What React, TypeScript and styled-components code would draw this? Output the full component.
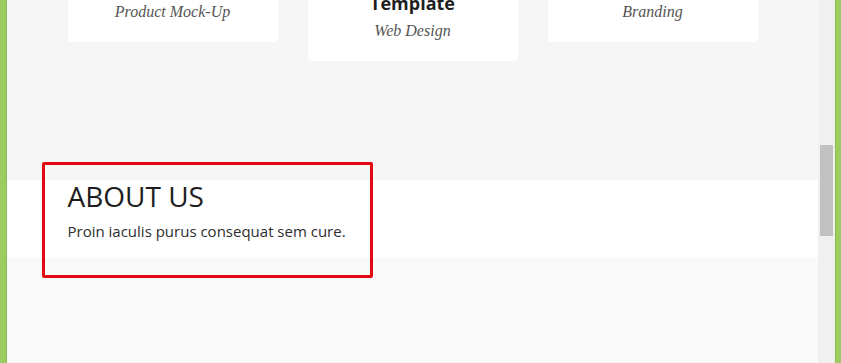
import styled, { createGlobalStyle } from 'styled-components'

const GlobalStyle = createGlobalStyle`
  html, body {
    margin: 0;
    padding: 0;
    height: 100%;
    overflow: hidden;
  }
  #root {
    height: 100%;
  }
`

const projects = [
  { title: 'Product Mock-Up Design', category: 'Product Mock-Up' },
  { title: 'Landing Page Template', category: 'Web Design' },
  { title: 'Brand Identity', category: 'Branding' },
]

const App = () => {
  return (
    <>
      <GlobalStyle />
      <Frame>
        <Edge />
        <Page>
          <Portfolio>
            <CardRow>
              {projects.map((project, index) => (
                <Card key={project.category}>
                  <Thumb />
                  <CardTitle $wide={index === 1}>{project.title}</CardTitle>
                  <Category>{project.category}</Category>
                </Card>
              ))}
            </CardRow>
          </Portfolio>

          <About>
            <Container>
              <Highlight />
              <Heading>ABOUT US</Heading>
              <Lead>Proin iaculis purus consequat sem cure.</Lead>
            </Container>
          </About>

          <Rest />
        </Page>
        <ScrollTrack>
          <ScrollThumb />
        </ScrollTrack>
        <Edge $right />
      </Frame>
    </>
  )
}

export default App

const Frame = styled.div`
  display: flex;
  height: 363px;
  width: 841px;
  overflow: hidden;
  background: #f5f5f5;
`

const Edge = styled.div<{ $right?: boolean }>`
  flex: 0 0 ${({ $right }) => ($right ? '6px' : '7px')};
  background: #9ccd5f;
  box-shadow: ${({ $right }) =>
    $right ? 'inset 1px 0 0 #8dbd52' : 'inset -1px 0 0 #8dbd52'};
`

const Page = styled.main`
  flex: 1;
  display: flex;
  flex-direction: column;
  min-width: 0;
  font-family: 'Open Sans', 'Noto Sans', sans-serif;
`

const Portfolio = styled.section`
  background: #f6f6f6;
  padding-bottom: 119px;
`

const CardRow = styled.div`
  display: flex;
  justify-content: center;
  align-items: flex-start;
  gap: 30px;
  margin-top: -191px;
`

const Card = styled.article`
  width: 210px;
  background: #fff;
  border-radius: 3px;
  padding-bottom: 19px;
  text-align: center;
`

const Thumb = styled.div`
  height: 150px;
  margin-bottom: 16px;
  background: #eaeaea;
  border-radius: 3px 3px 0 0;
`

const CardTitle = styled.h3<{ $wide?: boolean }>`
  margin: 0 auto 7px;
  max-width: ${({ $wide }) => ($wide ? '130px' : '190px')};
  color: #1f1f1f;
  font-family: 'Open Sans', sans-serif;
  font-size: 18px;
  font-weight: 700;
  line-height: 19px;
  white-space: ${({ $wide }) => ($wide ? 'normal' : 'nowrap')};
`

const Category = styled.p`
  margin: 0;
  color: #555;
  font-family: 'Liberation Serif', 'DejaVu Serif', serif;
  font-style: italic;
  font-size: 16px;
  line-height: 22px;
`

const About = styled.section`
  background: #fff;
  padding: 2px 0 16px;
`

const Container = styled.div`
  position: relative;
  width: 690px;
  margin: 0 auto;
`

const Highlight = styled.div`
  position: absolute;
  left: -26px;
  top: -20px;
  width: 331px;
  height: 116px;
  box-sizing: border-box;
  border: 3px solid #e30613;
  border-radius: 2px;
  pointer-events: none;
`

const Heading = styled.h2`
  margin: 0 0 10px;
  color: #1e1e1e;
  font-size: 28px;
  font-weight: 400;
  line-height: 28px;
`

const Lead = styled.p`
  margin: 0;
  color: #2e2e2e;
  font-size: 15px;
  line-height: 22px;
`

const Rest = styled.div`
  flex: 1;
  background: #f9f9f9;
`

const ScrollTrack = styled.div`
  flex: 0 0 17px;
  background: #f0f0f0;
  padding: 145px 2px 0;
  box-sizing: border-box;
`

const ScrollThumb = styled.div`
  height: 91px;
  background: #c1c1c1;
`
